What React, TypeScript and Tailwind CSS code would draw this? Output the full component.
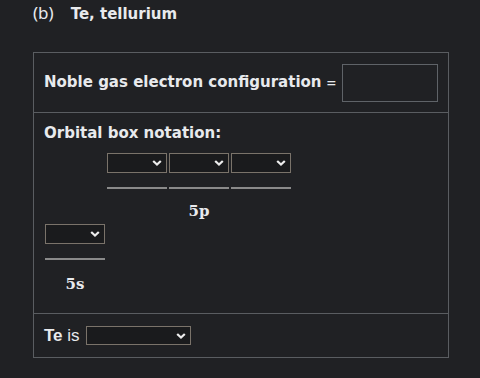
import React from 'react';

const Chevron = () => (
  <svg width="10" height="7" viewBox="0 0 10 7" className="pointer-events-none absolute right-[5px] top-1/2 -translate-y-1/2">
    <path d="M1.2 1.5l3.8 3.6 3.8-3.6" fill="none" stroke="#ececec" strokeWidth="2.2" />
  </svg>
);

const Dropdown: React.FC<{ className: string }> = ({ className }) => (
  <div className={`relative ${className}`}>
    <select className="h-full w-full appearance-none rounded-none border border-[#7a736a] bg-[#1a1b1d] outline-none" defaultValue="">
      <option value=""></option>
    </select>
    <Chevron />
  </div>
);

const Orbital: React.FC = () => (
  <div className="flex w-[60px] flex-col">
    <Dropdown className="h-[20px] w-[60px]" />
    <div className="mt-[14px] h-[2px] w-[60px] bg-[#8a8a8a]" />
  </div>
);

const App: React.FC = () => {
  return (
    <div className="h-[378px] w-[480px] bg-[#202124] text-[#e8eaed]" style={{ fontFamily: '"DejaVu Sans", sans-serif' }}>
      <div className="flex items-baseline pl-[33px] pt-[2px] text-[15px] leading-[22px]">
        <span className="font-['Noto_Sans'] text-[17px] font-normal">(b)</span>
        <span className="ml-[17px] font-bold">Te, tellurium</span>
      </div>

      <div className="ml-[33px] mt-[27px] w-[416px] border border-[#5a5d61]">
        <div className="flex h-[59px] items-center pl-[10px]">
          <span className="text-[15px] font-bold">Noble gas electron configuration</span>
          <span className="ml-[5px] font-['Noto_Sans'] text-[17px]">=</span>
          <div className="ml-[6px] h-[38px] w-[96px] border border-[#5f6368]" />
        </div>

        <div className="h-[201px] border-t border-[#5a5d61] pl-[10px] pt-[9px]">
          <div className="text-[15px] font-bold leading-[22px]">Orbital box notation:</div>
          <div className="ml-[63px] mt-[9px] flex w-[184px] flex-col">
            <div className="flex gap-[2px]">
              <Orbital />
              <Orbital />
              <Orbital />
            </div>
            <div className="mt-[13px] text-center font-['DejaVu_Serif'] text-[15px] font-bold leading-[18px]">5p</div>
          </div>
          <div className="ml-px mt-[4px] flex w-[60px] flex-col">
            <Orbital />
            <div className="mt-[15px] text-center font-['DejaVu_Serif'] text-[15px] font-bold leading-[18px]">5s</div>
          </div>
        </div>

        <div className="flex h-[44px] items-center border-t border-[#5a5d61] pl-[10px]">
          <span className="font-['Liberation_Sans'] text-[17px]">
            <span className="font-bold">Te</span> is
          </span>
          <Dropdown className="ml-[6px] h-[19px] w-[105px]" />
        </div>
      </div>
    </div>
  );
};

export default App;
